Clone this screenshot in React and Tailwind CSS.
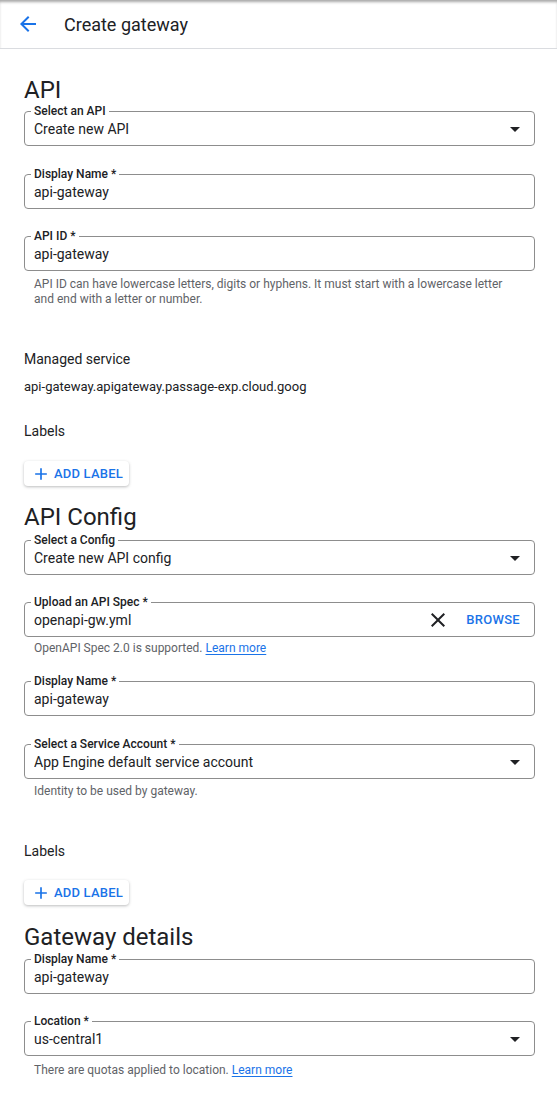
import React from 'react';

const FONT = { fontFamily: 'Roboto, "Liberation Sans", Arial, sans-serif' };

function ArrowDrop() {
  return (
    <svg width="24" height="24" viewBox="0 0 24 24" className="shrink-0 text-[#202124]">
      <path d="M7 10l5 5 5-5z" fill="currentColor" />
    </svg>
  );
}

function Field({ label, value, select, className = '', children }) {
  return (
    <div className={`relative h-[35px] rounded-[4px] border border-[#8d8d8d] flex items-center pl-[9px] pr-[7px] ${className}`}>
      <span className="absolute left-[6px] top-[-8px] bg-white px-[3px] text-[12px] leading-[14px] font-medium text-[#202124]">
        {label}
      </span>
      <span className="flex-1 pt-[1px] text-[14px] text-[#202124] truncate">{value}</span>
      {select && <ArrowDrop />}
      {children}
    </div>
  );
}

function Helper({ children, className = '' }) {
  return <p className={`pl-[10px] pr-[30px] text-[12px] leading-[15px] text-[#5f6368] ${className}`}>{children}</p>;
}

function LearnMore() {
  return <a className="text-[#1a73e8] underline underline-offset-2 decoration-[#1a73e8]">Learn more</a>;
}

function AddLabel({ className = '' }) {
  return (
    <button className={`h-[25px] w-[105px] rounded-[4px] bg-white shadow-[0_1px_3px_rgba(60,64,67,0.35)] flex items-center pl-[7px] gap-[3px] text-[#1a73e8] ${className}`}>
      <svg width="20" height="20" viewBox="0 0 24 24">
        <path d="M19 13h-6v6h-2v-6H5v-2h6V5h2v6h6v2z" fill="currentColor" />
      </svg>
      <span className="text-[13px] font-medium tracking-[0.2px]">ADD LABEL</span>
    </button>
  );
}

function Heading({ children, className = '' }) {
  return <h2 className={`text-[24px] leading-[28px] text-[#202124] ${className}`}>{children}</h2>;
}

export default function App() {
  return (
    <div className="min-h-[1097px] bg-white text-[#202124]" style={FONT}>
      <header className="h-[49px] border-b border-[#dadce0] flex items-center shadow-[inset_0_3px_3px_-1px_rgba(0,0,0,0.35)]">
        <svg width="24" height="24" viewBox="0 0 24 24" className="ml-[16px] text-[#1a73e8]">
          <path d="M20 11H7.83l5.59-5.59L12 4l-8 8 8 8 1.41-1.41L7.83 13H20v-2z" fill="currentColor" />
        </svg>
        <h1 className="ml-[24px] text-[18px] text-[#202124]">Create gateway</h1>
      </header>

      <main className="pl-6 pr-[22px] pb-8">
        <Heading className="mt-[27px]">API</Heading>
        <Field className="mt-[7px]" label="Select an API" value="Create new API" select />
        <Field className="mt-[28px]" label="Display Name *" value="api-gateway" />
        <Field className="mt-[27px]" label="API ID *" value="api-gateway" />
        <Helper className="mt-[6px]">
          API ID can have lowercase letters, digits or hyphens. It must start with a lowercase letter and end with a letter or number.
        </Helper>

        <p className="mt-[42px] text-[14px] leading-[20px]">Managed service</p>
        <p className="mt-[8px] text-[13px] leading-[20px]">api-gateway.apigateway.passage-exp.cloud.goog</p>

        <p className="mt-[24px] text-[14px] leading-[20px]">Labels</p>
        <AddLabel className="mt-[20px]" />

        <Heading className="mt-[17px]">API Config</Heading>
        <Field className="mt-[9px]" label="Select a Config" value="Create new API config" select />
        <Field className="mt-[27px]" label="Upload an API Spec *" value="openapi-gw.yml">
          <svg width="24" height="24" viewBox="0 0 24 24" className="shrink-0 text-[#202124]">
            <path d="M19 6.41L17.59 5 12 10.59 6.41 5 5 6.41 10.59 12 5 17.59 6.41 19 12 13.41 17.59 19 19 17.59 13.41 12z" fill="currentColor" />
          </svg>
          <span className="ml-[16px] mr-[7px] text-[13px] font-medium tracking-[0.3px] text-[#1a73e8]">BROWSE</span>
        </Field>
        <Helper className="mt-[4px]">
          OpenAPI Spec 2.0 is supported. <LearnMore />
        </Helper>
        <Field className="mt-[25px]" label="Display Name *" value="api-gateway" />
        <Field className="mt-[28px]" label="Select a Service Account *" value="App Engine default service account" select />
        <Helper className="mt-[5px]">Identity to be used by gateway.</Helper>

        <p className="mt-[42px] text-[14px] leading-[20px]">Labels</p>
        <AddLabel className="mt-[19px]" />

        <Heading className="mt-[18px]">Gateway details</Heading>
        <Field className="mt-[8px]" label="Display Name *" value="api-gateway" />
        <Field className="mt-[27px]" label="Location *" value="us-central1" select />
        <Helper className="mt-[7px]">
          There are quotas applied to location. <LearnMore />
        </Helper>
      </main>
    </div>
  );
}
